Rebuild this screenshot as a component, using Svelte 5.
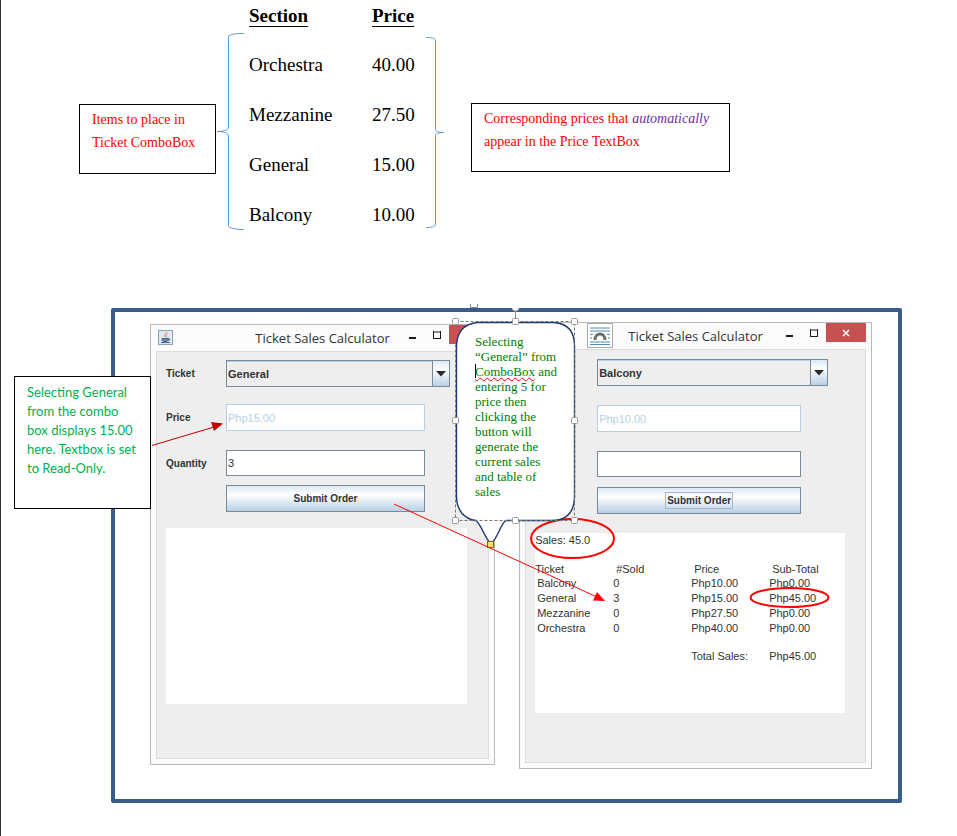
<script lang="ts">
  interface Sale {
    ticket: string
    sold: number
    price: string
    subTotal: string
  }

  const sections = [
    { name: 'Orchestra', price: '40.00' },
    { name: 'Mezzanine', price: '27.50' },
    { name: 'General', price: '15.00' },
    { name: 'Balcony', price: '10.00' },
  ]

  const sales: Sale[] = [
    { ticket: 'Balcony', sold: 0, price: 'Php10.00', subTotal: 'Php0.00' },
    { ticket: 'General', sold: 3, price: 'Php15.00', subTotal: 'Php45.00' },
    { ticket: 'Mezzanine', sold: 0, price: 'Php27.50', subTotal: 'Php0.00' },
    { ticket: 'Orchestra', sold: 0, price: 'Php40.00', subTotal: 'Php0.00' },
  ]

  // resize handles of the selected callout
  const handles = [
    [456, 322], [516, 322], [575, 322],
    [456, 421], [575, 421],
    [456, 521], [516, 521], [575, 521],
  ]

  let firstTicket = $state('General')
  let secondTicket = $state('Balcony')
  let firstQuantity = $state('3')
  let secondQuantity = $state('')
</script>

{#snippet windowButtons()}
  <div class="window-buttons">
    <button type="button" class="win-btn" aria-label="Minimize">
      <svg width="10" height="10"><path d="M1 8h7" stroke="#1c1c1c" stroke-width="2" /></svg>
    </button>
    <button type="button" class="win-btn" aria-label="Maximize">
      <svg width="10" height="10"><path d="M1 2h8M1 8.500h8M1.500 1v8M8.500 1v8" stroke="#1c1c1c" fill="none" /></svg>
    </button>
    <button type="button" class="win-btn close" aria-label="Close">
      <svg width="10" height="10"><path d="M2 2l6 6M8 2l-6 6" stroke="#fff" stroke-width="1.6" /></svg>
    </button>
  </div>
{/snippet}

{#snippet comboArrow()}
  <span class="combo-arrow">
    <svg width="10" height="6"><path d="M0 0h10L5 5.5z" fill="#2b2b2b" /></svg>
  </span>
{/snippet}

{#snippet options()}
  {#each sections as section (section.name)}
    <option>{section.name}</option>
  {/each}
{/snippet}

<main class="page">
  <section class="price-list">
    <p class="note note-items">Items to place in Ticket ComboBox</p>
    <svg class="brace brace-left" width="29" height="200" fill="none" stroke="#5b9bd5">
      <path d="M28 1.500C20 1.500 12.500 2 12.500 5V95C12.500 98 8 99.500 1 99.500C8 99.500 12.500 101 12.500 104V194C12.500 196 20 197.500 28 197.500" />
    </svg>
    <table class="sections">
      <thead>
        <tr><th>Section</th><th>Price</th></tr>
      </thead>
      <tbody>
        {#each sections as section (section.name)}
          <tr><td>{section.name}</td><td>{section.price}</td></tr>
        {/each}
      </tbody>
    </table>
    <svg class="brace brace-right" width="20" height="192" fill="none" stroke="#5b9bd5">
      <path d="M1 .5C6 .5 10.500 1 10.500 4V92C10.500 94.500 13 95.500 19 95.500C13 95.500 10.500 96.500 10.500 99V187C10.500 190 6 190.500 1 190.500" />
    </svg>
    <p class="note note-prices">
      Corresponding prices that <em>automatically</em> appear in the Price TextBox
    </p>
  </section>

  <section class="demo">
    <div class="frame">
      <article class="window window-first">
        <header class="title-bar">
          <svg class="java" width="15" height="15">
            <rect x=".5" y=".5" width="14" height="14" fill="#dfe8f0" stroke="#8f9fb0" />
            <path d="M8 2c2 1-3 2.500-1 5M9.500 4C7 5.500 9.500 6 8 7.500" fill="none" stroke="#e8872b" />
            <path d="M4 8.500h6v1.500c0 2-6 2-6 0zM10 8.500c2.500 0 2 2 0 2M3 12.500h9" fill="#6c8fb3" stroke="#41698f" />
          </svg>
          <h2>Ticket Sales Calculator</h2>
          {@render windowButtons()}
        </header>
        <form class="panel" onsubmit={(e) => e.preventDefault()}>
          <div class="row row-ticket">
            <label for="ticket-1">Ticket</label>
            <div class="combo">
              <select id="ticket-1" bind:value={firstTicket}>{@render options()}</select>
              {@render comboArrow()}
            </div>
          </div>
          <div class="row row-price">
            <label for="price-1">Price</label>
            <input id="price-1" class="field price" value="Php15.00" readonly />
          </div>
          <div class="row row-quantity">
            <label for="quantity-1">Quantity</label>
            <input id="quantity-1" class="field" bind:value={firstQuantity} />
          </div>
          <div class="row row-submit">
            <button class="submit">Submit Order</button>
          </div>
          <div class="output"></div>
        </form>
      </article>

      <article class="window window-second">
        <header class="title-bar">
          <button type="button" class="layout-options" aria-label="Layout Options">
            <svg width="20" height="18" fill="none">
              <path d="M0 1h20M0 4h20M0 15h20M0 17.500h20M0 7.500h3M17 7.500h3M0 11h2M18 11h2" stroke="#5288bd" />
              <path d="M5 13C5 5 15 5 15 13" stroke="#6d6d6d" stroke-width="3" />
            </svg>
          </button>
          <h2>Ticket Sales Calculator</h2>
          {@render windowButtons()}
        </header>
        <form class="panel" onsubmit={(e) => e.preventDefault()}>
          <div class="row row-ticket">
            <div class="combo">
              <select aria-label="Ticket" bind:value={secondTicket}>{@render options()}</select>
              {@render comboArrow()}
            </div>
          </div>
          <div class="row row-price">
            <input aria-label="Price" class="field price" value="Php10.00" readonly />
          </div>
          <div class="row row-quantity">
            <input aria-label="Quantity" class="field" bind:value={secondQuantity} />
          </div>
          <div class="row row-submit">
            <button class="submit"><span class="focused">Submit Order</span></button>
          </div>
          <div class="output">
            <p class="sales">Sales: 45.0</p>
            <table class="report">
              <thead>
                <tr><th>Ticket</th><th>#Sold</th><th>Price</th><th>Sub-Total</th></tr>
              </thead>
              <tbody>
                {#each sales as sale (sale.ticket)}
                  <tr>
                    <td>{sale.ticket}</td>
                    <td>{sale.sold}</td>
                    <td>{sale.price}</td>
                    <td>{sale.subTotal}</td>
                  </tr>
                {/each}
              </tbody>
              <tfoot>
                <tr><td></td><td></td><td>Total Sales:</td><td>Php45.00</td></tr>
              </tfoot>
            </table>
          </div>
        </form>
      </article>
    </div>

    <svg class="marks" viewBox="0 240 957 596" fill="none" aria-hidden="true">
      <g stroke="#f00" stroke-width="2">
        <ellipse cx="572.500" cy="538.500" rx="41.500" ry="19.500" />
        <ellipse cx="789.500" cy="597.500" rx="39" ry="9.500" />
      </g>
      <path
        d="M477 322.500H554Q574.500 324 574.500 346V496Q574.500 520 552 520.500H506C500 524 498 539 491 543C485 540 483 527 476 520.500C464 519 456.500 510 456.500 496V346Q457 325 477 322.500Z"
        fill="#fff"
        stroke="#1f3a6e"
        stroke-width="1.400"
      />
      <rect x="455.500" y="321.500" width="119" height="199" stroke="#777" stroke-dasharray="3 2" />
      <path d="M515.500 311v9" stroke="#888" />
      <path d="M512 308c0 4 7 4 7 0" fill="#fff" stroke="#999" />
      <path d="M470.500 304v3.500h7V304" stroke="#888" />
      {#each handles as [x, y]}
        <rect x={x - 3.5} y={y - 3.5} width="6" height="6" rx="1" fill="#fff" stroke="#999" />
      {/each}
      <rect x="487.500" y="541.500" width="6" height="6" fill="#ffe066" stroke="#7a6a20" />
      <path d="M394 504L597 597" stroke="#f00" />
      <path d="M605 601l-12-.5 4-8.500z" fill="#f00" />
      <path d="M152 445.500L214 427" stroke="#c00000" />
      <path d="M223 423.500l-9 7.500-3-9z" fill="#c00000" />
      <path d="M475.500 364v14" stroke="#000" />
    </svg>

    <p class="callout">
      Selecting “General” from <span class="misspelt">ComboBox</span> and entering 5 for price then
      clicking the button will generate the current sales and table of sales
    </p>
    <p class="note note-readonly">
      Selecting General from the combo box displays 15.00 here. Textbox is set to Read-Only.
    </p>
  </section>
</main>

<style>
  :global(body) {
    margin: 0;
    background: #fff;
  }

  .page {
    min-height: 100vh;
    box-shadow: inset 1px 0 #333;
    font-family: 'Liberation Serif', serif;
    color: #000;
  }

  .page,
  .page * {
    box-sizing: border-box;
  }

  p,
  h2 {
    margin: 0;
  }

  table {
    border-collapse: collapse;
  }

  th,
  td {
    padding: 0;
    text-align: left;
  }

  button,
  input,
  select {
    margin: 0;
    border-radius: 0;
    font: bold 11px 'Liberation Sans', sans-serif;
    color: #333;
  }

  .price-list {
    display: flex;
    align-items: flex-start;
    padding-left: 79px;
  }

  .brace {
    flex-shrink: 0;
  }

  .brace-left {
    margin-top: 32px;
  }

  .brace-right {
    margin-top: 37px;
  }

  .note {
    border: 1px solid #000;
    background: #fff;
    padding: 3px 12px;
    font-size: 14px;
    line-height: 23px;
    color: #f00;
  }

  .note em {
    color: #7030a0;
  }

  .note-items {
    width: 137px;
    height: 70px;
    margin-top: 104px;
  }

  .note-prices {
    width: 259px;
    height: 69px;
    margin: 103px 0 0 26px;
  }

  .sections {
    margin-left: 4px;
    table-layout: fixed;
    width: 176px;
    font-size: 19px;
  }

  .sections th:first-child {
    width: 123px;
  }

  .sections th {
    height: 40px;
    padding-bottom: 8px;
    text-decoration: underline;
    text-decoration-thickness: 1px;
    text-underline-offset: 4px;
  }

  .sections td {
    height: 50px;
  }

  .demo {
    position: relative;
    padding: 68px 55px 33px 111px;
  }

  .frame {
    display: flex;
    align-items: flex-start;
    gap: 24px;
    border: 4px solid #385d8a;
    border-radius: 2px;
    padding: 10px 26px 30px 35px;
  }

  .window {
    border: 1px solid #b9b9b9;
    background: #fbfbfb;
    padding: 0 5px 5px;
    font-family: 'Liberation Sans', sans-serif;
  }

  .window-first {
    flex: 345 1 0;
    margin-top: 2px;
  }

  .window-second {
    flex: 353 1 0;
  }

  .title-bar {
    display: grid;
    grid-template-columns: 1fr auto 1fr;
    height: 26px;
  }

  .title-bar h2 {
    font: 13px/26px 'Open Sans', sans-serif;
    color: #333;
  }

  .java {
    margin: 5px 0 0 2px;
  }

  .layout-options {
    display: flex;
    align-items: center;
    justify-content: center;
    width: 26px;
    height: 25px;
    margin-left: 62px;
    border: 1px solid #ababab;
    background: #fff;
    padding: 0;
  }

  .window-buttons {
    display: flex;
    justify-content: flex-end;
  }

  .win-btn {
    display: flex;
    flex-shrink: 0;
    align-items: center;
    justify-content: center;
    width: 24px;
    height: 19px;
    border: 0;
    background: none;
    padding: 0;
  }

  .close {
    width: 40px;
    background: #c75050;
  }

  .panel {
    border: 1px solid #dcdcdc;
    background: #eee;
    padding: 8px 0 0 9px;
  }

  .window-first .panel {
    height: 408px;
  }

  .window-second .panel {
    height: 414px;
    padding-top: 9px;
  }

  .row {
    display: flex;
    align-items: flex-start;
  }

  .window-first .row-submit {
    padding-left: 60px;
  }

  .window-second .row {
    padding-left: 62px;
  }

  .row label {
    width: 60px;
    font: bold 10px/27px 'Liberation Sans', sans-serif;
    color: #333;
  }

  .row-ticket {
    height: 44px;
  }

  .window-second .row-ticket,
  .row-price {
    height: 46px;
  }

  .row-quantity {
    height: 35px;
  }

  .window-second .row-quantity {
    height: 36px;
  }

  .combo {
    display: flex;
    width: 224px;
    height: 27px;
    border: 1px solid #7a8a99;
    box-shadow: inset 0 1px #b8cfe5;
  }

  .window-second .combo {
    width: 231px;
  }

  .combo select {
    flex: 1;
    appearance: none;
    border: 0;
    background: none;
    padding: 0 1px;
  }

  .combo-arrow {
    display: flex;
    align-items: center;
    justify-content: center;
    width: 17px;
    border-left: 1px solid #7a8a99;
    background: linear-gradient(#dde8f3, #fff 35%, #b8cfe5);
  }

  .field {
    width: 199px;
    height: 27px;
    border: 1px solid #7a8a99;
    background: #fff;
    padding: 0 1px;
    font-weight: normal;
  }

  .row-quantity .field {
    height: 26px;
  }

  .price {
    border-color: #b8cfe5;
    color: #b8cfe5;
  }

  .submit {
    display: flex;
    align-items: center;
    justify-content: center;
    width: 199px;
    height: 27px;
    border: 1px solid #7a8a99;
    background: linear-gradient(#dde8f3, #fff 35%, #b8cfe5);
    padding: 0;
    font-size: 10px;
  }

  .window-second .field,
  .window-second .submit {
    width: 204px;
  }

  .focused {
    border: 1px solid #a3b8cc;
    padding: 2px 1px;
  }

  .output {
    background: #fff;
    font-size: 11px;
    line-height: 15px;
    color: #333;
  }

  .window-first .output {
    width: 301px;
    height: 176px;
    margin-top: 16px;
  }

  .window-second .output {
    width: 310px;
    height: 180px;
    margin-top: 19px;
  }

  .sales {
    padding-bottom: 14px;
  }

  .report {
    width: 100%;
    table-layout: fixed;
  }

  .report th {
    width: 78px;
    height: 14px;
    padding-left: 3px;
    line-height: 14px;
    font-weight: normal;
  }

  .report th:first-child {
    padding-left: 0;
  }

  .report td:first-child {
    padding-left: 2px;
  }

  .report tfoot td {
    padding-top: 13px;
  }

  .marks {
    position: absolute;
    top: 0;
    left: 0;
    width: 957px;
    height: 596px;
    pointer-events: none;
  }

  .callout {
    position: absolute;
    top: 94px;
    left: 475px;
    width: 86px;
    font-size: 13px;
    line-height: 15px;
    color: #008000;
  }

  .misspelt {
    text-decoration: underline wavy #f00 1px;
  }

  .note-readonly {
    position: absolute;
    top: 136px;
    left: 14px;
    width: 137px;
    height: 133px;
    padding-top: 6px;
    font-family: Lato, sans-serif;
    font-size: 13px;
    line-height: 19px;
    color: #00b050;
  }
</style>
